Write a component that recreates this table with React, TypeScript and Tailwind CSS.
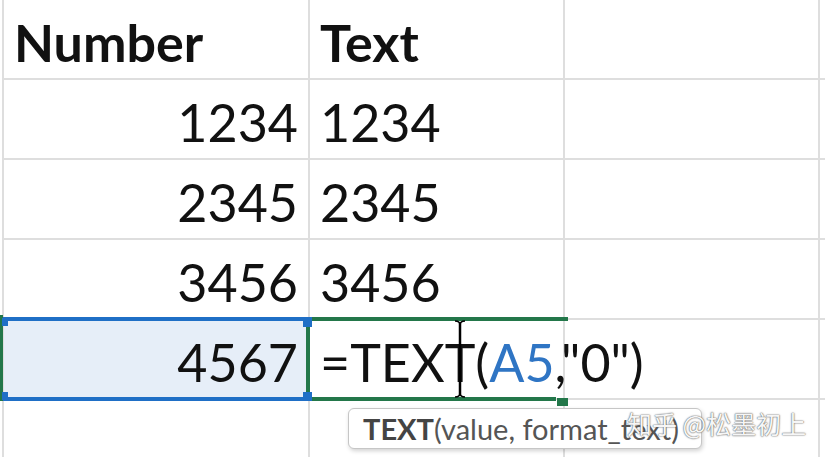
import React from 'react';

const rows = [
  { a: 'Number', b: 'Text', head: true },
  { a: '1234', b: '1234' },
  { a: '2345', b: '2345' },
  { a: '3456', b: '3456' },
];

const Cell = ({ children, right = false, bold = false }: { children?: React.ReactNode; right?: boolean; bold?: boolean }) => (
  <div
    className={`flex items-end leading-none pb-[10px] border-r-2 border-b-2 border-[#dedede] text-[52px] text-[#111] overflow-visible whitespace-nowrap ${
      right ? 'justify-end pr-[10px]' : 'pl-[10px]'
    } ${bold ? 'font-bold' : ''}`}
  >
    {children}
  </div>
);

export default function App() {
  return (
    <div className="relative w-[825px] h-[457px] overflow-hidden bg-white font-['Lato',sans-serif]">
      {/* sheet grid */}
      <div className="ml-[2px] border-l-2 border-[#dedede] grid grid-cols-[306px_255px_255px_1fr] auto-rows-[80px]">
        {rows.map((r, i) => (
          <React.Fragment key={i}>
            <Cell right={!r.head} bold={r.head}>{r.a}</Cell>
            <Cell bold={r.head}>{r.b}</Cell>
            <Cell />
            <Cell />
          </React.Fragment>
        ))}
        {/* row 5 */}
        <div className="flex items-end justify-end leading-none pb-[10px] pr-[10px] border-r-2 border-b-2 border-[#dedede] bg-[#e6eef8] text-[52px] text-[#111]">
          4567
        </div>
        <div className="flex items-end leading-none pb-[10px] pl-[10px] border-r-2 border-b-2 border-[#dedede] text-[52px] text-[#111] whitespace-nowrap overflow-visible z-10">
          =TEXT(<span className="text-[#2f75c4]">A5</span>,"0")
        </div>
        <Cell />
        <Cell />
        {/* row 6 */}
        <Cell />
        <Cell />
        <Cell />
        <Cell />
      </div>

      {/* A5 range reference highlight */}
      <div className="absolute left-0 top-[315px] w-[3px] h-[86px] bg-[#23774a]" />
      <div className="absolute left-[3px] top-[317px] w-[309px] h-[84px] border-y-4 border-[#1f6fc6] z-20">
        <span className="absolute -left-px -top-[3px] w-[6px] h-[8px] bg-[#1f6fc6]" />
        <span className="absolute -left-px -bottom-[3px] w-[6px] h-[8px] bg-[#1f6fc6]" />
        <span className="absolute right-0 -top-[2px] w-[9px] h-[8px] bg-[#1f6fc6]" />
        <span className="absolute right-0 -bottom-[3px] w-[9px] h-[8px] bg-[#1f6fc6]" />
      </div>

      {/* B5 active cell */}
      <div className="absolute left-[312px] top-[317px] w-[256px] h-[84px] border-t-4 border-[#23774a] z-10">
        <span className="absolute -left-[6px] top-[5px] w-[4px] h-[68px] bg-[#23774a]" />
        <span className="absolute left-0 -bottom-[0px] w-[244px] h-[4px] bg-[#23774a]" />
        <span className="absolute right-0 -bottom-[5px] w-[11px] h-[8px] bg-[#23774a]" />
      </div>

      {/* text cursor */}
      <svg className="absolute left-[452px] top-[318px] z-30" width="16" height="82" viewBox="0 0 16 82">
        <path d="M8 4 V78" stroke="#000" strokeWidth="2.5" fill="none" />
        <path d="M3 3 Q8 3 8 7 Q8 3 13 3" stroke="#000" strokeWidth="1.5" fill="none" />
        <path d="M3 79 Q8 79 8 75 Q8 79 13 79" stroke="#000" strokeWidth="1.5" fill="none" />
      </svg>

      {/* function tooltip */}
      <div className="absolute left-[348px] top-[408px] w-[354px] h-[41px] z-30 rounded-[6px] border border-[#c6c6c6] bg-white shadow-[1px_2px_4px_rgba(0,0,0,0.18)] flex items-center pl-[14px] text-[29px] leading-none text-[#555] whitespace-nowrap">
        <span className="font-bold text-[#444]">TEXT</span>(value, format_text)
      </div>

      {/* watermark */}
      <div className="absolute left-[627px] top-[411px] z-40 text-[25px] leading-none text-[#f6f6f6] whitespace-nowrap font-['Noto_Sans_CJK_SC',sans-serif] [text-shadow:0_0_1px_#555,0_0_2px_#777]">
        知乎 @松墨初上
      </div>
    </div>
  );
}
